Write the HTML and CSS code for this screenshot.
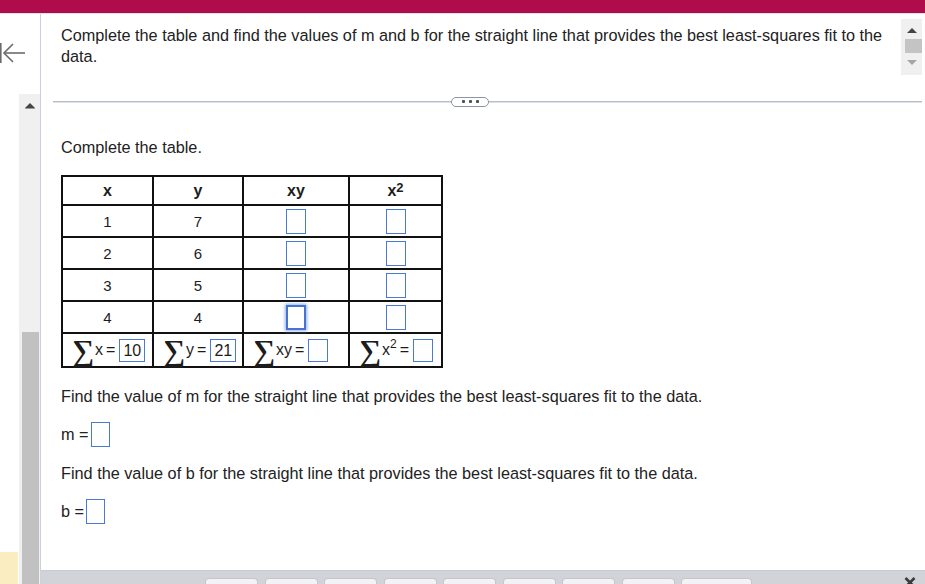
FILE: index.html
```html
<!DOCTYPE html>
<html lang="en">
<head>
<meta charset="utf-8">
<title>Least-squares fit</title>
<link rel="stylesheet" href="styles.css">
</head>
<body>
<div class="app">
  <div class="topbar"></div>
  <div class="main">
    <aside class="side">
      <div class="back">
        <svg class="back-icon" width="26" height="22" viewBox="0 0 26 22">
          <line x1="0.8" y1="1" x2="0.8" y2="21" stroke="#6b6b6b" stroke-width="1.6"/>
          <line x1="4" y1="11" x2="25" y2="11" stroke="#6b6b6b" stroke-width="1.6"/>
          <polyline points="13,2 4,11 13,20" fill="none" stroke="#6b6b6b" stroke-width="1.6"/>
        </svg>
      </div>
      <div class="side-lower">
        <div class="note-col"><div class="note"></div></div>
        <div class="vscroll">
          <div class="tri-up dark"></div>
          <div class="vthumb"></div>
        </div>
      </div>
    </aside>
    <section class="content">
      <div class="page">
        <div class="head">
          <p class="question">Complete the table and find the values of m and b for the straight line that provides the best least-squares fit to the data.</p>
          <div class="qscroll">
            <div class="tri-up dark small"></div>
            <div class="qthumb"></div>
            <div class="tri-down light small"></div>
          </div>
        </div>
        <div class="divider">
          <div class="rule left"></div>
          <div class="pill"><span></span><span></span><span></span></div>
          <div class="rule right"></div>
        </div>
        <p class="text first">Complete the table.</p>
        <div class="grid">
          <div class="cell hd">x</div>
          <div class="cell hd">y</div>
          <div class="cell hd">xy</div>
          <div class="cell hd">x<sup>2</sup></div>

          <div class="cell">1</div><div class="cell">7</div>
          <div class="cell"><span class="box"></span></div><div class="cell"><span class="box"></span></div>
          <div class="cell">2</div><div class="cell">6</div>
          <div class="cell"><span class="box"></span></div><div class="cell"><span class="box"></span></div>
          <div class="cell">3</div><div class="cell">5</div>
          <div class="cell"><span class="box"></span></div><div class="cell"><span class="box"></span></div>
          <div class="cell">4</div><div class="cell">4</div>
          <div class="cell"><span class="box focus"></span></div><div class="cell"><span class="box"></span></div>

          <div class="cell sum"><span class="sig">&sum;</span><span class="v">x</span><span class="eq">=</span><span class="box val">10</span></div>
          <div class="cell sum"><span class="sig">&sum;</span><span class="v">y</span><span class="eq">=</span><span class="box val">21</span></div>
          <div class="cell sum"><span class="sig">&sum;</span><span class="v">xy</span><span class="eq">=</span><span class="box"></span></div>
          <div class="cell sum"><span class="sig">&sum;</span><span class="v">x<sup>2</sup></span><span class="eq">=</span><span class="box"></span></div>
        </div>
        <p class="text after">Find the value of m for the straight line that provides the best least-squares fit to the data.</p>
        <div class="answer m"><span>m =</span><span class="box ans"></span></div>
        <p class="text gap">Find the value of b for the straight line that provides the best least-squares fit to the data.</p>
        <div class="answer b"><span>b =</span><span class="box ans"></span></div>
      </div>
      <div class="bottombar">
        <div class="tabs">
          <div class="tab"></div><div class="tab"></div><div class="tab"></div>
          <div class="tab"></div><div class="tab"></div><div class="tab"></div>
          <div class="tab"></div><div class="tab"></div><div class="tab wide"></div>
        </div>
        <svg class="close" width="12" height="7" viewBox="0 0 12 7">
          <line x1="1.5" y1="1" x2="10.5" y2="10" stroke="#3a3a3a" stroke-width="2.6"/>
          <line x1="10.5" y1="1" x2="1.5" y2="10" stroke="#3a3a3a" stroke-width="2.6"/>
        </svg>
      </div>
    </section>
  </div>
</div>
</body>
</html>
```
FILE: styles.css
```css
html, body {
  margin: 0;
  padding: 0;
}
body {
  width: 925px;
  height: 584px;
  overflow: hidden;
  background: #fff;
  font-family: "Liberation Sans", Arial, sans-serif;
  color: #222;
}
.app {
  display: flex;
  flex-direction: column;
  height: 584px;
}
.topbar {
  height: 13px;
  background: #b00c4c;
  border-bottom: 1px solid #e2e3ea;
  flex: none;
}
.main {
  flex: 1;
  display: flex;
  min-height: 0;
}
.side {
  width: 40px;
  border-right: 1px solid #ccd1dc;
  display: flex;
  flex-direction: column;
  flex: none;
}
.back {
  height: 80px;
  flex: none;
}
.back-icon {
  display: block;
  margin-top: 28px;
}
.side-lower {
  flex: 1;
  display: flex;
}
.note-col {
  width: 19px;
  display: flex;
  flex-direction: column;
  justify-content: flex-end;
}
.note {
  width: 18px;
  height: 32px;
  background: #faedc2;
}
.vscroll {
  width: 21px;
  background: #f0f0f0;
  display: flex;
  flex-direction: column;
  align-items: center;
}
.tri-up {
  width: 0;
  height: 0;
  border-left: 5px solid transparent;
  border-right: 5px solid transparent;
  border-bottom: 5px solid #444;
}
.vscroll .tri-up {
  margin-top: 9px;
  box-shadow: 0 1px 0 #999;
}
.tri-down {
  width: 0;
  height: 0;
  border-left: 5px solid transparent;
  border-right: 5px solid transparent;
  border-top: 5px solid #a6a6a6;
}
.vthumb {
  margin-top: auto;
  width: 17px;
  height: 252px;
  background: #c1c1c1;
  align-self: flex-end;
  margin-right: 1px;
}
.content {
  flex: 1;
  display: flex;
  flex-direction: column;
  min-width: 0;
}
.page {
  flex: 1;
  background: #fff;
  overflow: hidden;
  padding-left: 20px;
}
.head {
  display: flex;
  align-items: flex-start;
  height: 61px;
}
.question {
  margin: 11px 0 0 0;
  width: 832px;
  font-size: 16.25px;
  line-height: 21px;
}
.qscroll {
  margin: 5px 3px 0 auto;
  width: 21px;
  height: 56px;
  background: #f0f0f0;
  display: flex;
  flex-direction: column;
  align-items: center;
  flex: none;
}
.qscroll .tri-up {
  margin-top: 9px;
}
.qthumb {
  margin-top: 6px;
  width: 17px;
  height: 14px;
  background: #c4c4c4;
  align-self: flex-end;
}
.qscroll .tri-down {
  margin-top: 7px;
}
.divider {
  display: flex;
  align-items: center;
  margin: 21px 0 0 -8px;
  height: 11px;
}
.rule {
  height: 1px;
  border-top: 1px solid #b7bec9;
  background: #dde1e7;
}
.rule.left {
  width: 398px;
}
.rule.right {
  flex: 1;
  margin-right: 3px;
}
.pill {
  width: 36px;
  height: 8px;
  border: 1.5px solid #8b95a5;
  border-radius: 6px;
  display: flex;
  align-items: center;
  justify-content: center;
  gap: 4px;
  background: #fff;
}
.pill span {
  width: 3px;
  height: 3px;
  background: #4a4f5a;
  border-radius: 1px;
}
.text {
  margin: 0;
  font-size: 16.25px;
  line-height: 20px;
}
.text.first {
  margin-top: 30px;
}
.grid {
  margin-top: 18px;
  display: grid;
  grid-template-columns: 89px 88px 104px 91px;
  grid-template-rows: 27px 30px 30px 30px 30px 32px;
  gap: 2px;
  padding: 2px;
  background: #111;
  width: max-content;
}
.cell {
  background: #fff;
  display: flex;
  align-items: center;
  justify-content: center;
  font-size: 15px;
  color: #1c1c1c;
}
.cell.hd {
  font-weight: bold;
  font-size: 16px;
}
.cell.hd sup {
  font-size: 13px;
  line-height: 0;
  position: relative;
  top: -3px;
}
.box {
  display: inline-block;
  box-sizing: border-box;
  width: 20px;
  height: 25px;
  border: 1px solid #4a7bd4;
  background: #fff;
}
.box.focus {
  border: 2px solid #4674d0;
  box-shadow: 0 0 3px 1px #8fb0ec;
}
.cell.sum {
  font-size: 16px;
  justify-content: flex-start;
  padding-left: 9px;
}
.sig {
  font-family: "Liberation Serif", "Times New Roman", serif;
  font-weight: bold;
  font-size: 31px;
  line-height: 24px;
  margin-right: 1px;
  position: relative;
  top: 1px;
}
.v sup {
  font-size: 12px;
  line-height: 0;
  position: relative;
  top: -1px;
}
.eq {
  margin: 0 4px 0 3px;
}
.box.val {
  width: auto;
  height: 23px;
  padding: 0 3px;
  line-height: 21px;
  font-size: 16px;
}
.cell.sum .box {
  height: 23px;
}
.text.after {
  margin-top: 18px;
}
.text.gap {
  margin-top: 16px;
}
.answer {
  margin-top: 16px;
  display: flex;
  align-items: center;
  gap: 2px;
  font-size: 16.25px;
  height: 25px;
}
.box.ans {
  width: 19px;
  height: 25px;
}
.bottombar {
  height: 13px;
  flex: none;
  background: #d1d3d9;
  border-top: 1px solid #c6cad2;
  display: flex;
  align-items: flex-end;
}
.tabs {
  display: flex;
  gap: 6.5px;
  margin-left: 164px;
  height: 6px;
}
.tab {
  width: 53px;
  height: 6px;
  background: #f3f3f5;
  border: 1px solid #c3c6ce;
  border-bottom: none;
  border-radius: 4px 4px 0 0;
  box-sizing: border-box;
}
.tab.wide {
  width: 71px;
}
.close {
  margin-left: auto;
  margin-right: 9px;
  display: block;
}
```
